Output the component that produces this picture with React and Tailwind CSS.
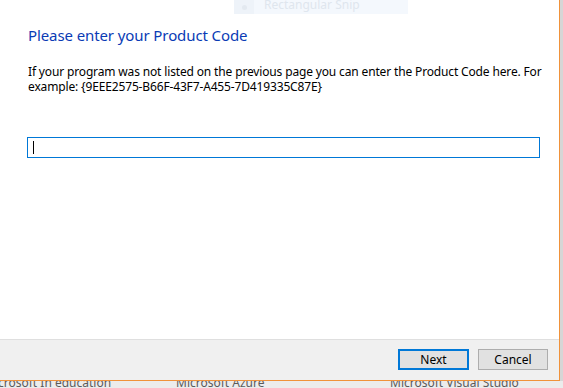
import React from "react";

const font = { fontFamily: '"Noto Sans", "Open Sans", Arial, sans-serif' };

export default function App() {
  return (
    <div
      className="relative w-[563px] h-[388px] overflow-hidden bg-[#ececec] flex flex-col"
      style={font}
    >
      <div className="flex">
        {/* dialog */}
        <div className="w-[560px] h-[381px] flex flex-col border-r border-b border-[#f0923a] bg-white">
          <div className="flex-1 border-b border-[#dfdfdf] pl-[28px] pr-[8px]">
            <h1 className="mt-[25px] text-[15px] leading-[20px] text-[#0a3bb5] font-normal tracking-[-0.1px]">
              Please enter your Product Code
            </h1>
            <p className="mt-[19px] text-[12px] leading-[15px] text-black tracking-[-0.15px]">
              If your program was not listed on the previous page you can enter the Product Code here. For example: {"{9EEE2575-B66F-43F7-A455-7D419335C87E}"}
            </p>
            <div className="mt-[43px] -ml-[1px] w-[513px] h-[21px] border border-[#0078d7] flex items-center pl-[5px]">
              <div className="w-px h-[13px] bg-black" />
            </div>
          </div>
          <div className="h-[40px] bg-[#f0f0f0] flex justify-end items-start pt-[9px] pr-[11px] gap-[9px]">
            <button className="w-[71px] h-[21px] border-2 border-[#0078d7] bg-[#e1e1e1] text-[12px] leading-none text-black">
              Next
            </button>
            <button className="w-[70px] h-[21px] border border-[#adadad] bg-[#e1e1e1] text-[12px] leading-none text-black">
              Cancel
            </button>
          </div>
        </div>
        <div className="flex-1 bg-[#d6d6d6]" />
      </div>
      {/* background window behind */}
      <div className="relative h-[7px] overflow-hidden text-[12px] text-[#5b5b5b]">
        <div className="absolute left-0 right-0 top-[-7px] flex whitespace-nowrap">
          <span className="w-[178px] shrink-0 -ml-[2px]">crosoft In education</span>
          <span className="w-[214px] shrink-0">Microsoft Azure</span>
          <span>Microsoft Visual Studio</span>
        </div>
      </div>
      {/* snip toolbar ghost */}
      <div className="absolute left-[234px] top-0 w-[174px] h-[14px] bg-[#f4f8fd] flex items-end">
        <div className="w-[20px] h-[14px] bg-[#eef3f9] flex items-center justify-center">
          <div className="w-[5px] h-[5px] rounded-full bg-[#e3e9f0]" />
        </div>
        <span className="ml-[10px] text-[12px] leading-[14px] text-[#dfe6ee] -translate-y-[2px]">
          Rectangular Snip
        </span>
      </div>
    </div>
  );
}
